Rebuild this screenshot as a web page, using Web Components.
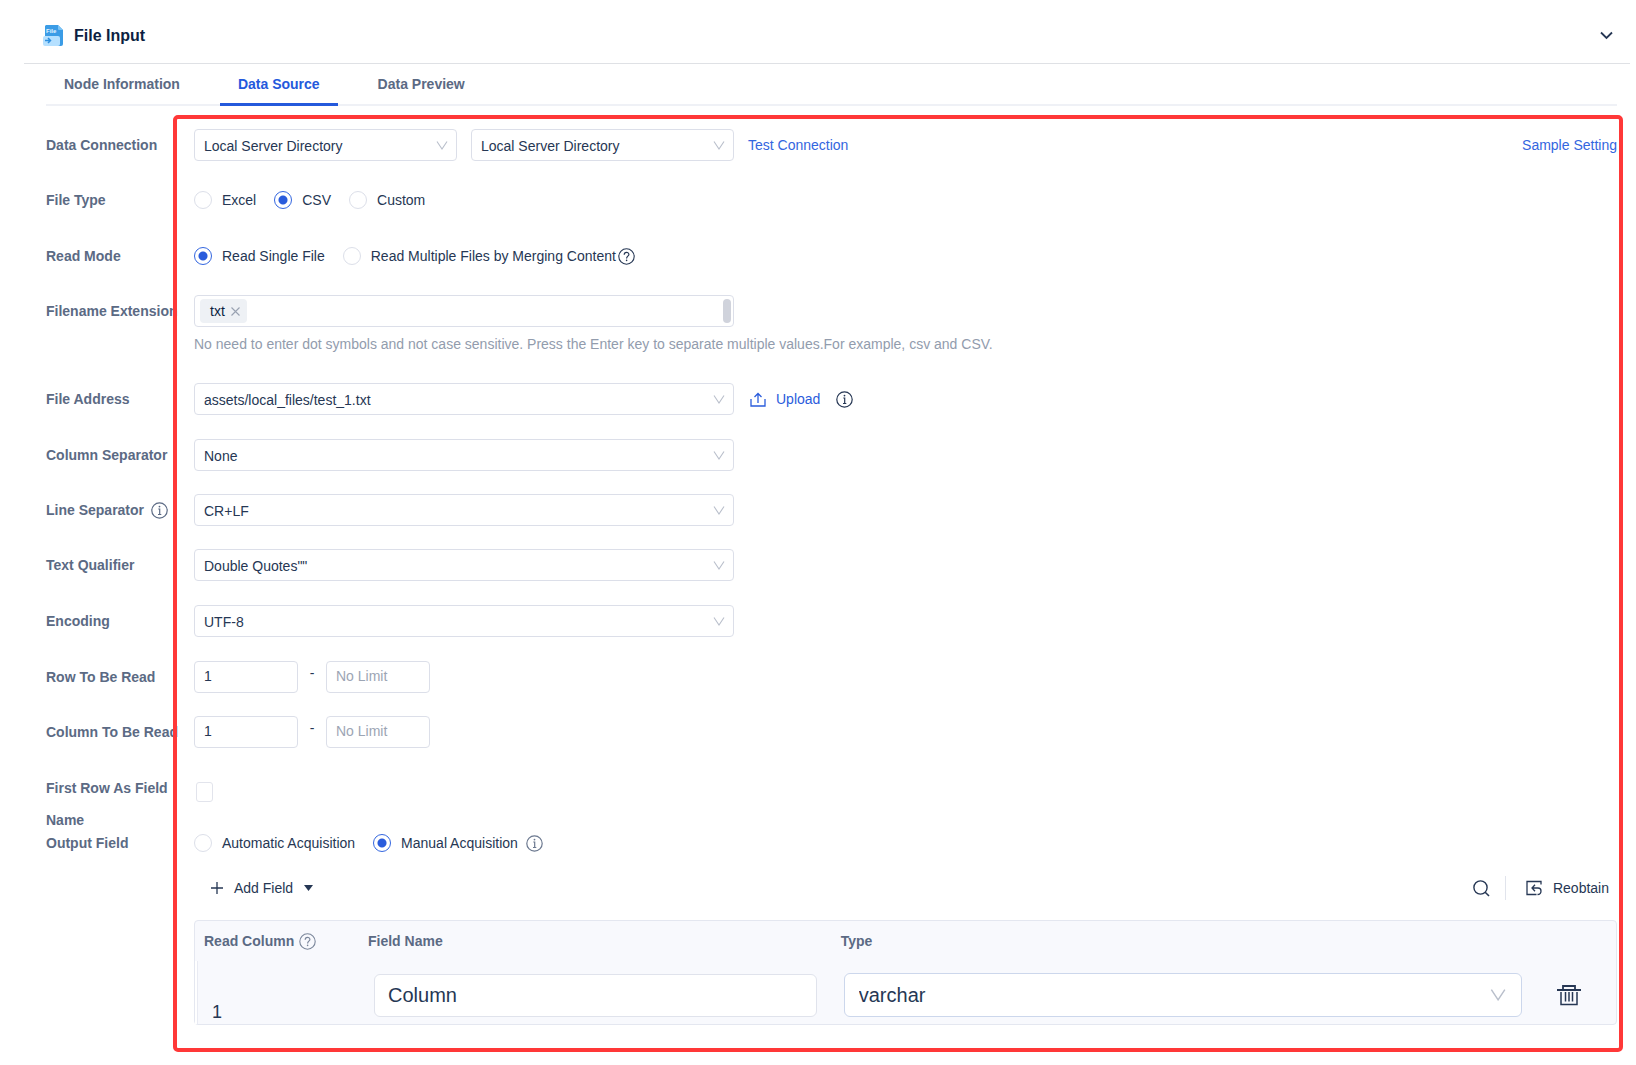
<!DOCTYPE html>
<html lang="en">
<head>
<meta charset="utf-8">
<title>File Input</title>
<style>
  body {
    margin: 0;
    background: #fff;
    font: 14px/32px "Liberation Sans", Arial, sans-serif;
    color: #263754;
  }
</style>
</head>
<body>
<file-input-node></file-input-node>

<script>
const html = String.raw;

const ICONS = {
  file: html`<svg width="20" height="21" viewBox="0 0 20 21">
    <path d="M3 0h12l5 5v14a2 2 0 0 1-2 2H5a3 3 0 0 1-3-3V1z" fill="#3b9ce6"/>
    <path d="M15 0l5 5h-4a1 1 0 0 1-1-1z" fill="#7cc4f6"/>
    <text x="3" y="8" font-size="6" font-weight="bold" fill="#e4f4ff">File</text>
    <rect x="0" y="11" width="17" height="10" rx="2" fill="#b5e0ff"/>
    <path d="M2 15.500h5M5 13l2.500 2.500L5 18" fill="none" stroke="#2c8fe0" stroke-width="1.500"/>
  </svg>`,
  collapse: html`<svg width="13" height="9" viewBox="0 0 13 9"><path d="M1 1.500l5.500 5.500L12 1.500" fill="none" stroke="#263754" stroke-width="1.800"/></svg>`,
  down: html`<svg width="12" height="9" viewBox="0 0 12 9"><path d="M1 .5L6 8l5-7.500" fill="none" stroke="currentColor" stroke-width="1.100"/></svg>`,
  info: html`<svg width="17" height="17" viewBox="0 0 17 17"><circle cx="8.500" cy="8.500" r="7.700" fill="none" stroke="currentColor" stroke-width="1.200"/><path d="M7.300 7h1.400v5.500M7 12.500h3.300" fill="none" stroke="currentColor" stroke-width="1.200"/><circle cx="8.500" cy="4.600" r=".9" fill="currentColor"/></svg>`,
  help: html`<svg width="17" height="17" viewBox="0 0 17 17"><circle cx="8.500" cy="8.500" r="7.700" fill="none" stroke="currentColor" stroke-width="1.100"/><path d="M6.200 6.700c0-3.200 4.700-3 4.700-.3 0 1.800-2.300 1.700-2.300 4" fill="none" stroke="currentColor" stroke-width="1.200"/><circle cx="8.600" cy="12.400" r=".8" fill="currentColor"/></svg>`,
  upload: html`<svg width="16" height="15" viewBox="0 0 16 15"><path d="M1 7v7h14V7M8 11V1.500M4.500 5L8 1.500 11.500 5" fill="none" stroke="currentColor" stroke-width="1.300"/></svg>`,
  close: html`<svg width="9" height="9" viewBox="0 0 9 9"><path d="M.5.500l8 8M8.500.500l-8 8" stroke="currentColor" stroke-width="1.100"/></svg>`,
  plus: html`<svg width="12" height="12" viewBox="0 0 12 12"><path d="M0 6h12M6 0v12" stroke="currentColor" stroke-width="1.300"/></svg>`,
  caret: html`<svg width="9" height="6" viewBox="0 0 9 6"><path d="M0 0h9L4.500 6z" fill="currentColor"/></svg>`,
  search: html`<svg width="17" height="17" viewBox="0 0 17 17"><circle cx="7.500" cy="7.500" r="6.600" fill="none" stroke="currentColor" stroke-width="1.400"/><path d="M12.200 12.200L16 16" stroke="currentColor" stroke-width="1.600"/></svg>`,
  reobtain: html`<svg width="16" height="16" viewBox="0 0 16 16"><path d="M15 4.500V1.500H1v13h9.500M9 4.800L6 8l3 3.200M6 8h6a3 3 0 0 1 3 3c0 2-1 3.500-3.500 3.500" fill="none" stroke="currentColor" stroke-width="1.300"/></svg>`,
  trash: html`<svg width="24" height="21" viewBox="0 0 24 21"><path d="M6 4V1h12v3M0 5h24" fill="none" stroke="currentColor" stroke-width="1.800"/><path d="M4 7v12.500h16V7M8.500 7v9.500M12 7v9.500M15.500 7v9.500" fill="none" stroke="currentColor" stroke-width="1.500"/></svg>`,
};

class UiIcon extends HTMLElement {
  constructor() {
    super();
    this.attachShadow({ mode: "open" });
  }
  connectedCallback() {
    this.shadowRoot.innerHTML = html`
      <style>
        :host {
          display: inline-flex;
          flex: none;
        }
        svg {
          display: block;
        }
      </style>
      ${ICONS[this.getAttribute("name")]}
    `;
  }
}
customElements.define("ui-icon", UiIcon);

// A label column and a control column. The label may run over the row below.
class FormRow extends HTMLElement {
  constructor() {
    super();
    this.attachShadow({ mode: "open" });
    this.shadowRoot.innerHTML = html`
      <style>
        :host {
          display: grid;
          grid-template-columns: 132px minmax(0, 1fr);
          column-gap: 16px;
          margin-bottom: 23px;
        }
        :host([roomy]) {
          margin-bottom: 24px;
        }
        .label {
          display: flex;
          align-items: center;
          gap: 7px;
          height: 32px;
          font-weight: bold;
          color: #5b6a84;
        }
        :host([long]) .label {
          align-items: flex-start;
        }
        .control {
          display: flex;
          align-items: center;
          gap: 14px;
          min-height: 32px;
        }
      </style>
      <div class="label"><slot name="label"></slot></div>
      <div class="control"><slot></slot></div>
      <slot name="below"></slot>
    `;
  }
}
customElements.define("form-row", FormRow);

class SelectBox extends HTMLElement {
  constructor() {
    super();
    this.attachShadow({ mode: "open" });
    this.shadowRoot.innerHTML = html`
      <style>
        :host {
          display: grid;
          align-items: center;
          flex: 0 1 540px;
          color: #263754;
        }
        :host([half]) {
          flex-basis: 263px;
        }
        ::slotted(select) {
          grid-area: 1 / 1;
          appearance: none;
          box-sizing: border-box;
          width: 100%;
          height: 32px;
          margin: 0;
          padding: 0 32px 2px 9px;
          border: 1px solid #dcdfe9;
          border-radius: 4px;
          background: #fff;
          font: inherit;
          color: inherit;
        }
        :host([large]) ::slotted(select) {
          height: 44px;
          padding: 0 48px 0 14px;
          border-color: #ccd7ec;
          border-radius: 6px;
          font-size: 20px;
        }
        ui-icon {
          grid-area: 1 / 1;
          justify-self: end;
          margin-right: 9px;
          color: #b9bfcb;
          pointer-events: none;
        }
        :host([large]) ui-icon {
          margin-right: 12px;
          zoom: 1.35;
        }
      </style>
      <slot></slot>
      <ui-icon name="down"></ui-icon>
    `;
  }
}
customElements.define("select-box", SelectBox);

class TagInput extends HTMLElement {
  constructor() {
    super();
    this.attachShadow({ mode: "open" });
    this.shadowRoot.innerHTML = html`
      <style>
        :host {
          display: flex;
          align-items: center;
          flex: 0 1 540px;
          box-sizing: border-box;
          height: 32px;
          padding: 0 2px 0 5px;
          border: 1px solid #dcdfe9;
          border-radius: 4px;
        }
        ::slotted(input) {
          flex: 1;
          min-width: 0;
          border: 0;
          outline: 0;
          background: none;
          font: inherit;
        }
        .thumb {
          width: 8px;
          height: 24px;
          border-radius: 4px;
          background: #d0d3dc;
        }
      </style>
      <slot name="tag"></slot>
      <slot></slot>
      <div class="thumb"></div>
    `;
  }
}
customElements.define("tag-input", TagInput);

class TabBar extends HTMLElement {
  constructor() {
    super();
    this.attachShadow({ mode: "open" });
    this.shadowRoot.innerHTML = html`
      <style>
        :host {
          display: flex;
          gap: 22px;
          height: 40px;
          border-bottom: 2px solid #eff1f6;
        }
      </style>
      <slot></slot>
    `;
  }
}
customElements.define("tab-bar", TabBar);

class FieldTable extends HTMLElement {
  constructor() {
    super();
    this.attachShadow({ mode: "open" });
    this.shadowRoot.innerHTML = html`
      <style>
        :host {
          display: block;
        }
        table {
          width: 100%;
          table-layout: fixed;
          border-collapse: separate;
          border-spacing: 0;
          border: 1px solid #e4e7f0;
          border-radius: 4px;
          background: #f8f9fd;
        }
        th {
          height: 40px;
          padding: 0 9px;
          text-align: left;
          line-height: 20px;
          color: #5b6a84;
        }
        .index {
          width: 146px;
        }
        .name {
          width: 32%;
        }
        .action {
          width: 70px;
        }
        .head {
          display: flex;
          align-items: center;
          gap: 5px;
        }
        .head ui-icon {
          color: #7b879b;
        }
        td {
          padding: 12px 15px 7px;
        }
        td.index {
          padding: 0 0 0 15px;
          border-left: 2px solid #fff;
          box-shadow: inset 1px 0 #e9ebf3;
          vertical-align: bottom;
          font-size: 18px;
          line-height: 24px;
        }
        td.type {
          padding: 12px 6px 7px 12px;
        }
        td.action {
          padding: 12px 12px 4px 6px;
        }
        input {
          box-sizing: border-box;
          display: block;
          width: 100%;
          height: 43px;
          padding: 0 13px;
          border: 1px solid #e0e3ec;
          border-radius: 6px;
          background: #fff;
          font: 20px "Liberation Sans", Arial, sans-serif;
          color: #263754;
        }
        button {
          display: block;
          margin: 0 auto;
          padding: 0;
          border: 0;
          background: none;
          color: #263754;
        }
      </style>
      <table>
        <thead>
          <tr>
            <th class="index"><span class="head">Read Column <ui-icon name="help"></ui-icon></span></th>
            <th class="name">Field Name</th>
            <th class="type">Type</th>
            <th class="action"></th>
          </tr>
        </thead>
        <tbody>
          <tr>
            <td class="index">1</td>
            <td class="name"><input value="Column" aria-label="Field Name"></td>
            <td class="type">
              <select-box large><select aria-label="Type"><option>varchar</option></select></select-box>
            </td>
            <td class="action"><button aria-label="Delete"><ui-icon name="trash"></ui-icon></button></td>
          </tr>
        </tbody>
      </table>
    `;
  }
}
customElements.define("field-table", FieldTable);

class FileInputNode extends HTMLElement {
  constructor() {
    super();
    this.attachShadow({ mode: "open" });
    this.shadowRoot.innerHTML = html`
      <style>
        :host {
          display: block;
          padding: 8px 6px 13px 24px;
        }
        header {
          display: flex;
          align-items: center;
          gap: 11px;
          height: 55px;
          padding: 0 17px 0 19px;
          border-bottom: 1px solid #dfe1e5;
        }
        h1 {
          flex: 1;
          margin: 0;
          font-size: 16px;
          color: #0d1f42;
        }
        button {
          display: flex;
          align-items: center;
          padding: 0;
          border: 0;
          background: none;
          font: inherit;
          color: inherit;
        }
        button[role="tab"] {
          box-sizing: border-box;
          height: 42px;
          padding: 0 18px;
          border-bottom: 3px solid transparent;
          font-weight: bold;
          color: #5b6a84;
        }
        button[aria-selected="true"] {
          border-color: #2459dc;
          color: #2459dc;
        }
        main {
          padding: 0 13px 0 22px;
        }
        a {
          color: #3366e0;
          text-decoration: none;
        }
        .form {
          position: relative;
          padding: 23px 0 27px;
        }
        /* highlight drawn over the control column */
        .highlight {
          position: absolute;
          inset: 9px -6px 0 127px;
          border: 4px solid #ff3838;
          border-radius: 5px;
          pointer-events: none;
        }
        .end {
          margin-left: auto;
        }
        .choices {
          display: flex;
          gap: 18px;
        }
        .choice {
          display: flex;
          align-items: center;
          gap: 10px;
        }
        .choice ui-icon {
          margin-left: -8px;
        }
        .choices > ui-icon {
          align-self: center;
          margin-left: -10px;
          color: #6b788f;
        }
        input[type="radio"] {
          appearance: none;
          box-sizing: border-box;
          width: 18px;
          height: 18px;
          margin: 0;
          border: 1px solid #dcdfe9;
          border-radius: 50%;
        }
        input[type="radio"]:checked {
          border-color: #3366e0;
          background: radial-gradient(circle, #2a5cdc 4px, #fff 5px);
        }
        input[type="checkbox"] {
          appearance: none;
          box-sizing: border-box;
          width: 17px;
          height: 20px;
          margin: 7px 0 0 2px;
          border: 1px solid #e2e4ec;
          border-radius: 3px;
        }
        .tag {
          display: flex;
          align-items: center;
          gap: 6px;
          height: 24px;
          padding: 0 7px 0 10px;
          border-radius: 4px;
          background: #eef1f5;
          color: #0d1f42;
        }
        .tag button {
          color: #99a2b1;
        }
        .hint {
          grid-column: 2;
          margin: 0;
          height: 33px;
          line-height: 34px;
          color: #929cad;
        }
        .upload {
          gap: 10px;
          padding: 0 2px;
          color: #2a5cdc;
        }
        .range {
          display: flex;
        }
        .range input {
          box-sizing: border-box;
          width: 104px;
          height: 32px;
          padding: 0 9px 2px;
          border: 1px solid #dcdfe9;
          border-radius: 4px;
          font: inherit;
          color: inherit;
        }
        .range input::placeholder {
          color: #9ca5b4;
        }
        .range span {
          width: 28px;
          text-align: center;
          line-height: 24px;
        }
        .output {
          margin-left: 148px;
        }
        .toolbar {
          display: flex;
          align-items: center;
          height: 32px;
          margin: -10px 8px 16px 17px;
        }
        .toolbar button {
          gap: 11px;
        }
        .toolbar .search {
          margin: 0 15px 0 auto;
        }
        .toolbar .reobtain {
          padding: 0 0 0 20px;
          height: 24px;
          border-left: 1px solid #e1e4ec;
        }
      </style>
      <header>
        <ui-icon name="file"></ui-icon>
        <h1>File Input</h1>
        <button aria-label="Collapse"><ui-icon name="collapse"></ui-icon></button>
      </header>
      <main>
        <tab-bar role="tablist">
          <button role="tab">Node Information</button>
          <button role="tab" aria-selected="true">Data Source</button>
          <button role="tab">Data Preview</button>
        </tab-bar>
        <div class="form">
          <form-row>
            <label slot="label" for="connection">Data Connection</label>
            <select-box half><select id="connection"><option>Local Server Directory</option></select></select-box>
            <select-box half><select aria-label="Connection name"><option>Local Server Directory</option></select></select-box>
            <a href="#">Test Connection</a>
            <a href="#" class="end">Sample Setting</a>
          </form-row>
          <form-row roomy>
            <span slot="label" id="type-label">File Type</span>
            <div class="choices" role="radiogroup" aria-labelledby="type-label">
              <label class="choice"><input type="radio" name="type">Excel</label>
              <label class="choice"><input type="radio" name="type" checked>CSV</label>
              <label class="choice"><input type="radio" name="type">Custom</label>
            </div>
          </form-row>
          <form-row>
            <span slot="label" id="mode-label">Read Mode</span>
            <div class="choices" role="radiogroup" aria-labelledby="mode-label">
              <label class="choice"><input type="radio" name="mode" checked>Read Single File</label>
              <label class="choice"><input type="radio" name="mode">Read Multiple Files by Merging Content<ui-icon name="help"></ui-icon></label>
            </div>
          </form-row>
          <form-row>
            <label slot="label" for="extension">Filename Extension</label>
            <tag-input>
              <span slot="tag" class="tag">txt<button aria-label="Remove txt"><ui-icon name="close"></ui-icon></button></span>
              <input id="extension">
            </tag-input>
            <p slot="below" class="hint">No need to enter dot symbols and not case sensitive. Press the Enter key to separate multiple values.For example, csv and CSV.</p>
          </form-row>
          <form-row roomy>
            <label slot="label" for="address">File Address</label>
            <select-box><select id="address"><option>assets/local_files/test_1.txt</option></select></select-box>
            <button class="upload"><ui-icon name="upload"></ui-icon>Upload</button>
            <ui-icon name="info"></ui-icon>
          </form-row>
          <form-row>
            <label slot="label" for="column-separator">Column Separator</label>
            <select-box><select id="column-separator"><option>None</option></select></select-box>
          </form-row>
          <form-row>
            <label slot="label" for="line-separator">Line Separator</label>
            <ui-icon slot="label" name="info"></ui-icon>
            <select-box><select id="line-separator"><option>CR+LF</option></select></select-box>
          </form-row>
          <form-row roomy>
            <label slot="label" for="qualifier">Text Qualifier</label>
            <select-box><select id="qualifier"><option>Double Quotes""</option></select></select-box>
          </form-row>
          <form-row roomy>
            <label slot="label" for="encoding">Encoding</label>
            <select-box><select id="encoding"><option>UTF-8</option></select></select-box>
          </form-row>
          <form-row>
            <label slot="label" for="row-from">Row To Be Read</label>
            <div class="range"><input id="row-from" value="1"><span>-</span><input placeholder="No Limit" aria-label="Last row"></div>
          </form-row>
          <form-row roomy>
            <label slot="label" for="column-from">Column To Be Read</label>
            <div class="range"><input id="column-from" value="1"><span>-</span><input placeholder="No Limit" aria-label="Last column"></div>
          </form-row>
          <form-row long>
            <label slot="label" for="first-row">First Row As Field Name</label>
            <input type="checkbox" id="first-row">
          </form-row>
          <form-row>
            <span slot="label" id="output-label">Output Field</span>
            <div class="choices" role="radiogroup" aria-labelledby="output-label">
              <label class="choice"><input type="radio" name="output">Automatic Acquisition</label>
              <label class="choice"><input type="radio" name="output" checked>Manual Acquisition</label>
              <ui-icon name="info"></ui-icon>
            </div>
          </form-row>
          <div class="output">
            <div class="toolbar">
              <button><ui-icon name="plus"></ui-icon>Add Field<ui-icon name="caret"></ui-icon></button>
              <button class="search" aria-label="Search"><ui-icon name="search"></ui-icon></button>
              <button class="reobtain"><ui-icon name="reobtain"></ui-icon>Reobtain</button>
            </div>
            <field-table></field-table>
          </div>
          <div class="highlight"></div>
        </div>
      </main>
    `;
  }
}
customElements.define("file-input-node", FileInputNode);
</script>
</body>
</html>
